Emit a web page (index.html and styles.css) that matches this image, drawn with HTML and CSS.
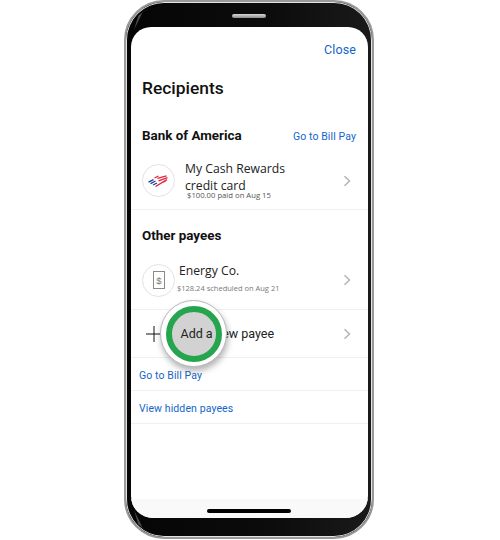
FILE: index.html
```html
<!DOCTYPE html>
<html lang="en">
<head>
<meta charset="utf-8">
<title>Recipients</title>
<link rel="stylesheet" href="styles.css">
</head>
<body>
<div class="phone">
  <div class="speaker"></div>
  <main class="screen">
    <div class="top"><a class="link close">Close</a></div>
    <h1>Recipients</h1>
    <div class="sec-head first"><h2>Bank of America</h2><a class="link bill">Go to Bill Pay</a></div>
    <div class="row row-boa">
      <span class="avatar">
        <svg width="21" height="12" viewBox="0 0 21 12">
          <g fill="none" stroke-width="1.3">
            <path d="M0.5 7.2 L5.5 4.6 M2.5 8.6 L7.5 6 M5 10 L9 8" stroke="#1f3f8f"/>
            <path d="M6.5 3 L10.5 1 M9.5 3.4 L18.5 0.8 M7.5 11.5 L19 4.6 M10.5 5.8 L19.5 2.6 M12 8.5 L18 5.8" stroke="#e3243b"/>
          </g>
        </svg>
      </span>
      <div class="info boa-info">
        <div class="title">My Cash Rewards<br>credit card</div>
        <div class="sub">$100.00 paid on Aug 15</div>
      </div>
      <svg class="chev" width="8" height="12" viewBox="0 0 8 12"><path d="M1.5 1.2 L6.5 6 L1.5 10.8" fill="none" stroke="#b4b4b4" stroke-width="1.5"/></svg>
    </div>
    <div class="sec-head"><h2>Other payees</h2></div>
    <div class="row row-energy">
      <span class="avatar">
        <svg width="14" height="20" viewBox="0 0 14 20">
          <rect x="1.5" y="1.5" width="11" height="17" fill="none" stroke="#8a8a8a" stroke-width="1"/>
          <text x="7" y="13.5" class="dollar" text-anchor="middle">$</text>
        </svg>
      </span>
      <div class="info energy-info">
        <div class="title">Energy Co.</div>
        <div class="sub">$128.24 scheduled on Aug 21</div>
      </div>
      <svg class="chev" width="8" height="12" viewBox="0 0 8 12"><path d="M1.5 1.2 L6.5 6 L1.5 10.8" fill="none" stroke="#b4b4b4" stroke-width="1.5"/></svg>
    </div>
    <div class="row row-add">
      <svg class="plus" width="16" height="16" viewBox="0 0 16 16"><path d="M0 8 H16 M8 0 V16" stroke="#111" stroke-width="1"/></svg>
      <div class="add-label">Add a new payee</div>
      <svg class="chev" width="8" height="12" viewBox="0 0 8 12"><path d="M1.5 1.2 L6.5 6 L1.5 10.8" fill="none" stroke="#b4b4b4" stroke-width="1.5"/></svg>
    </div>
    <div class="row-link"><a class="link">Go to Bill Pay</a></div>
    <div class="row-link"><a class="link">View hidden payees</a></div>
    <div class="spacer"></div>
    <div class="home-zone"><span class="home"></span></div>
  </main>
  <div class="callout"><div class="callout-inner">Add a</div></div>
</div>
</body>
</html>
```
FILE: styles.css
```css
* { box-sizing: border-box; }
html, body { margin: 0; height: 100%; }
body {
  width: 500px;
  height: 540px;
  background: #fff;
  overflow: hidden;
  display: flex;
  justify-content: center;
  font-family: Roboto, "Liberation Sans", Arial, sans-serif;
  color: #111;
}
.phone {
  position: relative;
  width: 250px;
  height: 539px;
  margin-left: -2px;
  padding: 27px 6px 0 7px;
  background: linear-gradient(90deg, #050505, #0c0c0c 60%, #1a1a1a);
  border: 2px solid #9a9a9a;
  border-radius: 40px;
  box-shadow: inset 0 0 0 1px #e4e4e4;
}
.phone::before,
.phone::after {
  content: "";
  position: absolute;
  left: 8px;
  width: 14px;
  height: 22px;
  background: #4a4a4a;
}
.phone::before {
  top: 6px;
  clip-path: polygon(100% 0, 60% 22%, 0 100%, 30% 35%);
}
.phone::after {
  bottom: 5px;
  clip-path: polygon(0 0, 30% 65%, 100% 100%, 60% 78%);
}
.speaker {
  position: absolute;
  left: 106px;
  top: 12px;
  width: 34px;
  height: 4px;
  border-radius: 2px;
  background: linear-gradient(#d8d8d8, #8c8c8c);
}
.screen {
  display: flex;
  flex-direction: column;
  width: 237px;
  height: 491px;
  margin-left: -2px;
  margin-top: -2px;
  background: #fff;
  border-radius: 20px 20px 22px 22px;
  overflow: hidden;
}
.link { color: #1565c8; font-size: 10.5px; letter-spacing: .1px; }
.top { display: flex; justify-content: flex-end; padding: 15px 12px 0 0; height: 50px; }
.close { font-size: 12.5px; line-height: 15px; }
h1 { margin: 0; padding-left: 11px; font-size: 17.4px; font-weight: 500; line-height: 22px; height: 22px; color: #111; }
.sec-head { display: flex; justify-content: space-between; align-items: center; padding: 0 12px 0 11px; height: 20px; margin-top: 15px; }
.sec-head.first { margin-top: 26px; }
h2 { margin: 0; font-size: 13.4px; font-weight: 700; }
.bill { padding-top: 2px; }
.row { position: relative; display: flex; align-items: center; border-bottom: 1px solid #f0f0f0; padding: 0 17px 0 11px; }
.row-boa { height: 58px; margin-top: 7px; }
.row-energy { height: 59px; margin-top: 6px; }
.row-add { height: 48px; }
.avatar { flex: none; width: 33px; height: 33px; border: 1px solid #e2e2e2; border-radius: 50%; display: flex; align-items: center; justify-content: center; }
.info { flex: 1; min-width: 0; }
.boa-info { padding-left: 10px; margin-top: -2px; }
.energy-info { padding-left: 4px; margin-top: -5px; }
.title { font-family: "Open Sans", sans-serif; font-size: 12.2px; line-height: 17px; color: #222; }
.sub { font-family: "Open Sans", sans-serif; font-size: 7.7px; line-height: 7px; color: #555; padding-left: 2px; margin-top: -2px; }
.energy-info .sub { padding-left: 0; margin-left: -2px; margin-top: 5px; font-size: 7.5px; line-height: 9px; color: #777; }
.chev { flex: none; }
.plus { flex: none; margin-left: 4px; }
.add-label { flex: 1; padding-left: 18px; font-size: 12.5px; color: #222; }
.dollar { font-family: "Liberation Sans", sans-serif; font-size: 9.5px; fill: #777; }
.row-link { display: flex; align-items: center; height: 33px; border-bottom: 1px solid #f0f0f0; padding: 2px 0 0 8px; }
.spacer { flex: 1; }
.home-zone { height: 19px; background: #f9f9f9; display: flex; justify-content: center; align-items: center; padding: 4px 2px 0 0; }
.home { display: block; width: 84px; height: 4px; border-radius: 2px; background: #000; }
.callout {
  position: absolute;
  left: 34px;
  top: 298px;
  width: 67px;
  height: 67px;
  padding: 4.5px;
  background: #fff;
  border-radius: 50%;
  border: 1px solid #bbb;
  box-shadow: 1px 4px 6px rgba(0,0,0,.3);
}
.callout-inner {
  width: 100%;
  height: 100%;
  border: 6.5px solid #27a54e;
  border-radius: 50%;
  background: #d2d2d2;
  display: flex;
  align-items: center;
  padding-left: 9px;
  font-size: 12.5px;
  white-space: nowrap;
  color: #222;
}
```
